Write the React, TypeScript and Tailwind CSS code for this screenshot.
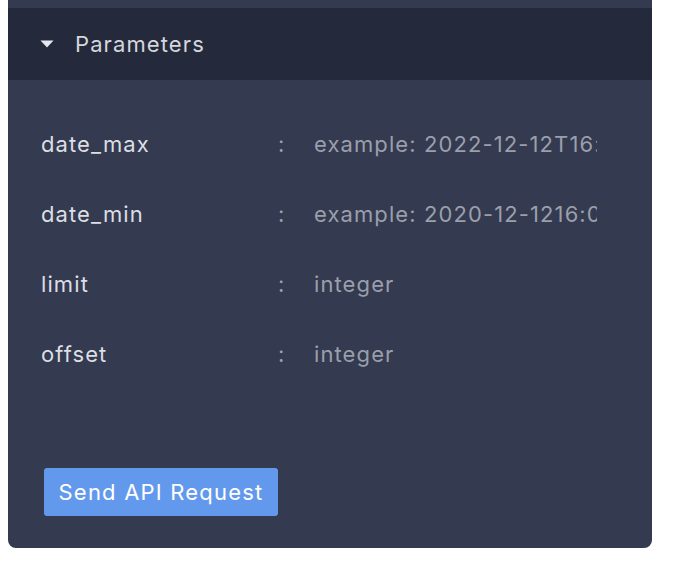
import React from 'react';

type Param = { name: string; placeholder: string };

const params: Param[] = [
  { name: 'date_max', placeholder: 'example: 2022-12-12T16:00:00' },
  { name: 'date_min', placeholder: 'example: 2020-12-1216:00:00' },
  { name: 'limit', placeholder: 'integer' },
  { name: 'offset', placeholder: 'integer' },
];

export default function App() {
  return (
    <div className="min-h-[566px] w-[680px] bg-white font-['Inter',sans-serif] tracking-[1.1px]">
      <div className="ml-2 w-[644px] rounded-b-lg bg-[#343a50] pt-2 pb-8">
        {/* 標題列 */}
        <div className="flex h-[72px] items-center gap-[21px] bg-[#242a3b] pl-[32px]">
          <svg width="14" height="8" viewBox="0 0 14 8" className="text-[#e5e7eb]">
            <path d="M0.5 0.5h13L7 7.5z" fill="currentColor" />
          </svg>
          <span className="text-[22px] text-[#d4d7dd]">Parameters</span>
        </div>

        {/* 參數列表 */}
        <div className="flex flex-col pt-[29px] pl-[33px]">
          {params.map((p) => (
            <div key={p.name} className="flex h-[70px] items-center">
              <span className="w-[237px] text-[22px] text-[#dcdfe4]">{p.name}</span>
              <span className="w-[36px] text-[22px] text-[#9ea3ae]">:</span>
              <input
                type="text"
                placeholder={p.placeholder}
                className="w-[283px] bg-transparent text-[22px] tracking-[1.1px] text-[#dcdfe4] outline-none placeholder:text-[#9a9fab]"
              />
            </div>
          ))}
        </div>

        <div className="pt-[79px] pl-[36px]">
          <button className="h-[48px] w-[234px] rounded-[3px] bg-[#6399ec] text-[22px] tracking-[1.2px] text-white">
            Send API Request
          </button>
        </div>
      </div>
    </div>
  );
}
